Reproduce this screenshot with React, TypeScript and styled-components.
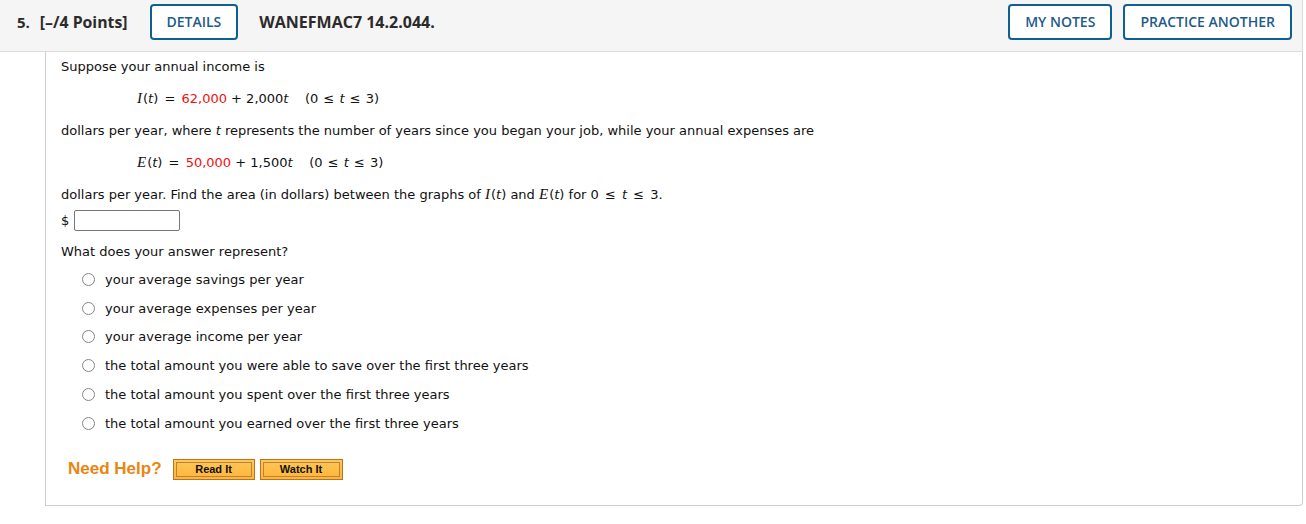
import React from "react";
import styled, { createGlobalStyle } from "styled-components";

const Global = createGlobalStyle`
  html, body { margin: 0; padding: 0; background: #fff; }
  body { font-family: "DejaVu Sans", Verdana, sans-serif; }
`;

const Page = styled.div`
  width: 1306px;
`;

const Header = styled.div`
  box-sizing: border-box;
  width: 1303px;
  height: 52px;
  background: #f5f5f5;
  border-bottom: 1px solid #dcdcdc;
  border-right: 1px solid #dcdcdc;
  display: flex;
  align-items: center;
  padding: 0 10px 8px 17px;
  font-family: "Open Sans", sans-serif;
  color: #2b2b2b;
`;

const Num = styled.span`
  font-weight: 700;
  font-size: 15px;
  margin-right: 10px;
`;

const Points = styled.span`
  font-weight: 700;
  font-size: 15.8px;
  margin-right: 22px;
`;

const OutlineButton = styled.button<{ $ml?: number }>`
  box-sizing: border-box;
  height: 36px;
  padding: 0 15px;
  margin-left: ${(p) => p.$ml ?? 0}px;
  border: 2px solid #10608f;
  border-radius: 4px;
  background: #fff;
  color: #1d5b8a;
  font-family: "Open Sans", sans-serif;
  font-size: 14px;
  font-weight: 600;
  cursor: pointer;
`;

const Code = styled.span`
  font-weight: 700;
  font-size: 16px;
  margin-left: 21px;
  flex: 1;
`;

const Panel = styled.div`
  box-sizing: border-box;
  margin-left: 45px;
  width: 1258px;
  border-left: 1px solid #cfcfcf;
  border-right: 1px solid #cfcfcf;
  border-bottom: 1px solid #cfcfcf;
  border-bottom-right-radius: 4px;
  padding: 6px 0 25px 15px;
  font-size: 13px;
  color: #111;
`;

const P = styled.div<{ $mt?: number }>`
  line-height: 18px;
  margin-top: ${(p) => p.$mt ?? 0}px;
`;

const Eq = styled.div`
  line-height: 18px;
  margin-top: 14px;
  margin-left: 76px;
  white-space: pre;
`;

const Var = styled.i`
  font-style: italic;
`;

const CapVar = styled.i`
  font-family: "Liberation Serif", serif;
  font-style: italic;
  font-size: 15px;
  line-height: 1;
  margin-right: 1px;
`;

const Rel = styled.span<{ $m?: number }>`
  margin: 0 ${(p) => p.$m ?? 2}px;
`;

const Red = styled.span`
  color: #f01010;
`;

const AnswerRow = styled.div`
  display: flex;
  align-items: center;
  margin-top: 6px;
  gap: 5px;
`;

const Input = styled.div`
  box-sizing: border-box;
  width: 106px;
  height: 21px;
  border: 1px solid #777;
  border-radius: 2px;
  background: #fff;
`;

const Options = styled.div`
  margin-top: 4px;
  margin-left: 21px;
  display: flex;
  flex-direction: column;
`;

const Option = styled.label`
  display: flex;
  align-items: center;
  height: 28.8px;
  gap: 10px;
`;

const Radio = styled.span`
  box-sizing: border-box;
  width: 13px;
  height: 13px;
  border: 1px solid #858585;
  border-radius: 50%;
  background: #fff;
`;

const Help = styled.div`
  display: flex;
  align-items: center;
  margin-top: 21px;
  margin-left: 7px;
  font-family: "Liberation Sans", Arial, sans-serif;
`;

const HelpLabel = styled.span`
  color: #ea8512;
  font-weight: 700;
  font-size: 17px;
  margin-right: 11px;
`;

const HelpButton = styled.span<{ $w: number }>`
  box-sizing: border-box;
  width: ${(p) => p.$w}px;
  height: 21px;
  margin-right: 5px;
  border: 1px solid #b8741c;
  background: linear-gradient(#ffc75a, #fdb53c);
  display: flex;
  align-items: center;
  justify-content: center;
  padding: 2px;
`;

const HelpInner = styled.span`
  box-sizing: border-box;
  width: 100%;
  height: 100%;
  border: 1px solid #c0822c;
  display: flex;
  align-items: center;
  justify-content: center;
  font-size: 11px;
  font-weight: 700;
  color: #111;
`;

const options = [
  "your average savings per year",
  "your average expenses per year",
  "your average income per year",
  "the total amount you were able to save over the first three years",
  "the total amount you spent over the first three years",
  "the total amount you earned over the first three years",
];

export default function App() {
  return (
    <Page>
      <Global />
      <Header>
        <Num>5.</Num>
        <Points>[–/4 Points]</Points>
        <OutlineButton>DETAILS</OutlineButton>
        <Code>WANEFMAC7 14.2.044.</Code>
        <OutlineButton>MY NOTES</OutlineButton>
        <OutlineButton $ml={11}>PRACTICE ANOTHER</OutlineButton>
      </Header>
      <Panel>
        <P>Suppose your annual income is</P>
        <Eq>
          <CapVar>I</CapVar>(<Var>t</Var>) <Rel>=</Rel> <Red>62,000</Red> + 2,000<Var>t</Var>{"    "}(0 <Rel $m={1}>≤</Rel> <Var>t</Var> <Rel $m={1}>≤</Rel> 3)
        </Eq>
        <P $mt={14}>
          dollars per year, where <Var>t</Var> represents the number of years since you began your job, while your annual expenses are
        </P>
        <Eq>
          <CapVar>E</CapVar>(<Var>t</Var>) <Rel>=</Rel> <Red>50,000</Red> + 1,500<Var>t</Var>{"    "}(0 <Rel $m={1}>≤</Rel> <Var>t</Var> <Rel $m={1}>≤</Rel> 3)
        </Eq>
        <P $mt={14}>
          dollars per year. Find the area (in dollars) between the graphs of <CapVar>I</CapVar>(<Var>t</Var>) and <CapVar>E</CapVar>(<Var>t</Var>) for 0 <Rel>≤</Rel> <Var>t</Var> <Rel>≤</Rel> 3.
        </P>
        <AnswerRow>
          <span>$</span>
          <Input />
        </AnswerRow>
        <P $mt={12}>What does your answer represent?</P>
        <Options>
          {options.map((o) => (
            <Option key={o}>
              <Radio />
              <span>{o}</span>
            </Option>
          ))}
        </Options>
        <Help>
          <HelpLabel>Need Help?</HelpLabel>
          <HelpButton $w={82}>
            <HelpInner>Read It</HelpInner>
          </HelpButton>
          <HelpButton $w={83}>
            <HelpInner>Watch It</HelpInner>
          </HelpButton>
        </Help>
      </Panel>
    </Page>
  );
}
